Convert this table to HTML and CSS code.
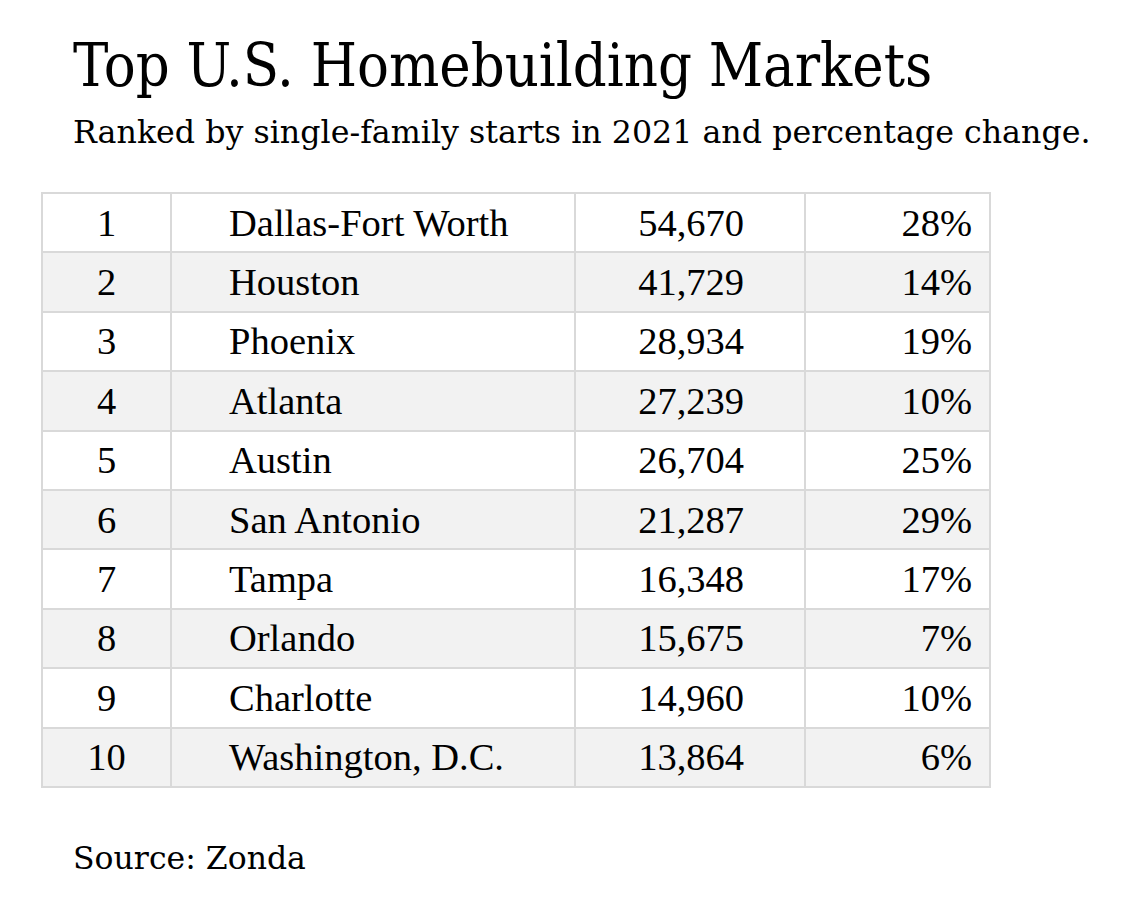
FILE: index.html
```html
<!DOCTYPE html>
<html lang="en">
<head>
<meta charset="utf-8">
<title>Top U.S. Homebuilding Markets</title>
<link rel="stylesheet" href="styles.css">
</head>
<body>
<div class="page">
  <h1 class="title">Top U.S. Homebuilding Markets</h1>
  <p class="subtitle">Ranked by single-family starts in 2021 and percentage change.</p>
  <table class="markets">
    <tbody>
      <tr><td class="rank">1</td><td class="name">Dallas-Fort Worth</td><td class="starts">54,670</td><td class="pct">28%</td></tr>
      <tr><td class="rank">2</td><td class="name">Houston</td><td class="starts">41,729</td><td class="pct">14%</td></tr>
      <tr><td class="rank">3</td><td class="name">Phoenix</td><td class="starts">28,934</td><td class="pct">19%</td></tr>
      <tr><td class="rank">4</td><td class="name">Atlanta</td><td class="starts">27,239</td><td class="pct">10%</td></tr>
      <tr><td class="rank">5</td><td class="name">Austin</td><td class="starts">26,704</td><td class="pct">25%</td></tr>
      <tr><td class="rank">6</td><td class="name">San Antonio</td><td class="starts">21,287</td><td class="pct">29%</td></tr>
      <tr><td class="rank">7</td><td class="name">Tampa</td><td class="starts">16,348</td><td class="pct">17%</td></tr>
      <tr><td class="rank">8</td><td class="name">Orlando</td><td class="starts">15,675</td><td class="pct">7%</td></tr>
      <tr><td class="rank">9</td><td class="name">Charlotte</td><td class="starts">14,960</td><td class="pct">10%</td></tr>
      <tr><td class="rank">10</td><td class="name">Washington, D.C.</td><td class="starts">13,864</td><td class="pct">6%</td></tr>
    </tbody>
  </table>
  <p class="source">Source: Zonda</p>
</div>
</body>
</html>
```
FILE: styles.css
```css
html, body {
  margin: 0;
  padding: 0;
  background: #ffffff;
}

.page {
  padding: 30px 0 0 41px;
  color: #000;
}

.title {
  margin: 0 0 0 32px;
  font-family: "DejaVu Serif Condensed", "DejaVu Serif", serif;
  font-weight: normal;
  font-size: 59px;
  line-height: 72px;
}

.subtitle {
  margin: 8px 0 0 32px;
  font-family: "DejaVu Serif", serif;
  font-size: 31.7px;
  line-height: 44px;
}

.markets {
  margin-top: 38px;
  border-collapse: collapse;
  font-family: "Liberation Serif", "Times New Roman", serif;
  font-size: 38.5px;
}

.markets tr:nth-child(even) {
  background: #f2f2f2;
}

.markets td {
  border: 2px solid #d9d9d9;
  height: 57.4px;
  padding: 0;
  line-height: 40px;
  vertical-align: middle;
}

.rank {
  width: 127px;
  text-align: center;
}

.name {
  width: 345px;
  padding-left: 57px !important;
}

.starts {
  width: 168px;
  text-align: right;
  padding-right: 60px !important;
}

.pct {
  width: 166px;
  text-align: right;
  padding-right: 17px !important;
}

.source {
  margin: 50px 0 0 32px;
  font-family: "DejaVu Serif", serif;
  font-size: 31.5px;
  line-height: 40px;
}
```
